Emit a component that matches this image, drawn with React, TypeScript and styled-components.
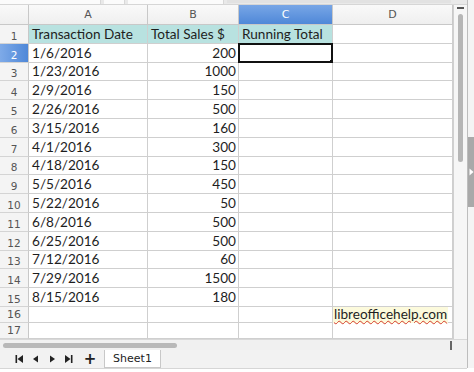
import React from 'react';
import styled, { createGlobalStyle } from 'styled-components';

const GlobalStyle = createGlobalStyle`
  html, body {
    margin: 0;
    padding: 0;
    background: #f3f3f3;
  }
  body {
    font-family: Lato, 'Liberation Sans', sans-serif;
    overflow: hidden;
  }
`;

const columns = [
  { label: 'A', width: 119 },
  { label: 'B', width: 91 },
  { label: 'C', width: 94 },
  { label: 'D', width: 120 },
];

const data: [string, string][] = [
  ['1/6/2016', '200'],
  ['1/23/2016', '1000'],
  ['2/9/2016', '150'],
  ['2/26/2016', '500'],
  ['3/15/2016', '160'],
  ['4/1/2016', '300'],
  ['4/18/2016', '150'],
  ['5/5/2016', '450'],
  ['5/22/2016', '50'],
  ['6/8/2016', '500'],
  ['6/25/2016', '500'],
  ['7/12/2016', '60'],
  ['7/29/2016', '1500'],
  ['8/15/2016', '180'],
];

const App: React.FC = () => {
  return (
    <Window>
      <GlobalStyle />
      <Main>
        <ToolbarStrip>
          <ToolBox $w={100} />
          <ToolBox $w={20} />
          <ToolBox $w={95} />
          <ToolFill />
        </ToolbarStrip>
        <Body>
          <Sheet>
            <HeaderRow>
              <Corner />
              {columns.map((c) => (
                <ColHeader key={c.label} $w={c.width} $active={c.label === 'C'}>
                  {c.label}
                </ColHeader>
              ))}
            </HeaderRow>

            <Row $h={18.8}>
              <RowHeader>1</RowHeader>
              <Cell $w={119} $fill="#b8e2e0">Transaction Date</Cell>
              <Cell $w={91} $fill="#b8e2e0">Total Sales $</Cell>
              <Cell $w={94} $fill="#b8e2e0">Running Total</Cell>
              <Cell $w={120} />
            </Row>

            {data.map(([date, sales], i) => (
              <Row key={date} $h={18.8}>
                <RowHeader $active={i === 0}>{i + 2}</RowHeader>
                <Cell $w={119}>{date}</Cell>
                <Cell $w={91} $right>
                  {sales}
                </Cell>
                <Cell $w={94}>{i === 0 && <Selection />}</Cell>
                <Cell $w={120} />
              </Row>
            ))}

            <Row $h={16}>
              <RowHeader $small>16</RowHeader>
              <Cell $w={119} />
              <Cell $w={91} />
              <Cell $w={94} />
              <Cell $w={120} $over>
                <Squiggly>libreofficehelp.com</Squiggly>
              </Cell>
            </Row>
            <Row $h={16}>
              <RowHeader $small>17</RowHeader>
              <Cell $w={119} />
              <Cell $w={91} />
              <Cell $w={94} />
              <Cell $w={120} />
            </Row>
          </Sheet>

          <VScroll>
            <SplitMark />
            <VThumb />
          </VScroll>
        </Body>

        <HScroll>
          <HThumb />
          <ResizeGrip />
        </HScroll>

        <TabBar>
          <NavButton>
            <svg width="9" height="10" viewBox="0 0 9 10">
              <rect x="0.5" y="1" width="1.6" height="8" fill="#222" />
              <path d="M8 1 L2.5 5 L8 9 Z" fill="#222" />
            </svg>
          </NavButton>
          <NavButton>
            <svg width="7" height="10" viewBox="0 0 7 10">
              <path d="M6 1.5 L1 5 L6 8.5 Z" fill="#222" />
            </svg>
          </NavButton>
          <NavButton>
            <svg width="7" height="10" viewBox="0 0 7 10">
              <path d="M1 1.5 L6 5 L1 8.5 Z" fill="#222" />
            </svg>
          </NavButton>
          <NavButton>
            <svg width="9" height="10" viewBox="0 0 9 10">
              <path d="M1 1 L6.5 5 L1 9 Z" fill="#222" />
              <rect x="6.9" y="1" width="1.6" height="8" fill="#222" />
            </svg>
          </NavButton>
          <AddButton>+</AddButton>
          <SheetTab>Sheet1</SheetTab>
        </TabBar>
      </Main>

      <SidePanel>
        <SideHandle>
          <svg width="5" height="8" viewBox="0 0 5 8">
            <path d="M0.5 0.5 L4.5 4 L0.5 7.5 Z" fill="#fff" />
          </svg>
        </SideHandle>
      </SidePanel>
    </Window>
  );
};

const Window = styled.div`
  width: 474px;
  height: 372px;
  display: flex;
  background: #fff;
  overflow: hidden;
`;

const Main = styled.div`
  width: 467px;
  display: flex;
  flex-direction: column;
`;

const ToolbarStrip = styled.div`
  height: 5px;
  display: flex;
  gap: 3px;
  background: #e9e9e9;
  border-bottom: 1px solid #d6d6d6;
  box-sizing: border-box;
`;

const ToolBox = styled.div<{ $w: number }>`
  width: ${({ $w }) => $w}px;
  background: #fbfbfb;
  border-right: 1px solid #d8d8d8;
`;

const ToolFill = styled.div`
  flex: 1;
  margin: 0 16px 1px 0;
  background: #e2e2e2;
`;

const Body = styled.div`
  display: flex;
  height: 334px;
`;

const Sheet = styled.div`
  width: 453px;
  display: flex;
  flex-direction: column;
  background: #fff;
`;

const HeaderRow = styled.div`
  display: flex;
  height: 20px;
  background: linear-gradient(#f9f9f9, #efefef);
  border-bottom: 1px solid #c8c8c8;
  box-sizing: border-box;
`;

const Corner = styled.div`
  width: 29px;
  border-right: 1px solid #c8c8c8;
  box-sizing: border-box;
`;

const ColHeader = styled.div<{ $w: number; $active?: boolean }>`
  width: ${({ $w }) => $w}px;
  box-sizing: border-box;
  border-right: 1px solid #c8c8c8;
  display: flex;
  align-items: center;
  justify-content: center;
  font-family: 'DejaVu Sans', sans-serif;
  font-size: 11px;
  color: ${({ $active }) => ($active ? '#fff' : '#555')};
  background: ${({ $active }) =>
    $active ? 'linear-gradient(#78a6e6, #4f88d8)' : 'transparent'};
`;

const Row = styled.div<{ $h: number }>`
  display: flex;
  height: ${({ $h }) => $h}px;
  flex-shrink: 0;
`;

const RowHeader = styled.div<{ $active?: boolean; $small?: boolean }>`
  width: 29px;
  box-sizing: border-box;
  border-right: 1px solid #c8c8c8;
  border-bottom: 1px solid #d4d4d4;
  display: flex;
  align-items: flex-end;
  justify-content: center;
  padding-bottom: 1px;
  font-family: 'DejaVu Sans', sans-serif;
  font-size: ${({ $small }) => ($small ? 11 : 10.5)}px;
  color: ${({ $active }) => ($active ? '#fff' : '#555')};
  background: ${({ $active }) =>
    $active ? 'linear-gradient(90deg, #7eaae8, #4f88d8)' : '#f4f4f4'};
`;

const Cell = styled.div<{ $w: number; $fill?: string; $right?: boolean; $over?: boolean }>`
  position: relative;
  z-index: ${({ $over }) => ($over ? 2 : 'auto')};
  width: ${({ $w }) => $w}px;
  box-sizing: border-box;
  border-right: 1px solid #cfcfcf;
  border-bottom: 1px solid #cfcfcf;
  background: ${({ $fill }) => $fill || '#fff'};
  display: flex;
  align-items: flex-end;
  justify-content: ${({ $right }) => ($right ? 'flex-end' : 'flex-start')};
  padding: 0 2px 0 3px;
  font-size: 13.6px;
  line-height: 17px;
  color: #1e1e1e;
  white-space: nowrap;
`;

const Selection = styled.div`
  position: absolute;
  left: -1px;
  top: -1px;
  right: -1px;
  bottom: -1px;
  border: 2px solid #111;

  &::after {
    content: '';
    position: absolute;
    right: -4px;
    bottom: -4px;
    width: 5px;
    height: 5px;
    background: #111;
  }
`;

const Squiggly = styled.span`
  margin: 0 0 -1px -3px;
  padding: 0 1px;
  background: #fcfadc;
  text-decoration: underline wavy #d43a2a;
  text-decoration-thickness: 1px;
  text-underline-offset: 1px;
  line-height: 15px;
  height: 16px;
`;

const VScroll = styled.div`
  position: relative;
  width: 14px;
  background: #f6f6f6;
  border-left: 1px solid #d0d0d0;
  box-sizing: border-box;
`;

const SplitMark = styled.div`
  position: absolute;
  left: 3px;
  top: 2px;
  width: 7px;
  height: 2px;
  background: #555;
`;

const VThumb = styled.div`
  position: absolute;
  left: 4px;
  top: 9px;
  width: 5px;
  height: 148px;
  border-radius: 3px;
  background: #b6b6b6;
`;

const HScroll = styled.div`
  position: relative;
  height: 11px;
  background: #f0f0f0;
  border-top: 1px solid #d8d8d8;
  box-sizing: border-box;
`;

const HThumb = styled.div`
  position: absolute;
  left: 3px;
  top: 3px;
  width: 174px;
  height: 5px;
  border-radius: 3px;
  background: #b8b8b8;
`;

const ResizeGrip = styled.div`
  position: absolute;
  left: 450px;
  top: 1px;
  width: 2px;
  height: 9px;
  background: #666;
`;

const TabBar = styled.div`
  height: 18px;
  display: flex;
  align-items: stretch;
  padding-left: 11px;
  background: #f2f2f2;
  border-bottom: 1px solid #d6d6d6;
`;

const NavButton = styled.div`
  width: 16.5px;
  display: flex;
  align-items: center;
  justify-content: center;
`;

const AddButton = styled.div`
  width: 20px;
  margin-left: 3px;
  display: flex;
  align-items: center;
  justify-content: center;
  font-family: 'DejaVu Sans', sans-serif;
  font-weight: bold;
  font-size: 15px;
  color: #222;
`;

const SheetTab = styled.div`
  margin-left: 4px;
  width: 57px;
  box-sizing: border-box;
  background: #fff;
  border: 1px solid #c8c8c8;
  border-top: none;
  display: flex;
  align-items: center;
  justify-content: center;
  font-family: 'DejaVu Sans', sans-serif;
  font-size: 11px;
  color: #222;
`;

const SidePanel = styled.div`
  position: relative;
  width: 7px;
  height: 368px;
  background: #f4f4f4;
  border-left: 1px solid #bdbdbd;
  box-sizing: border-box;
`;

const SideHandle = styled.div`
  position: absolute;
  left: 0;
  right: 0;
  top: 137px;
  height: 70px;
  background: #a9a9a9;
  display: flex;
  align-items: center;
  justify-content: center;
`;

export default App;
